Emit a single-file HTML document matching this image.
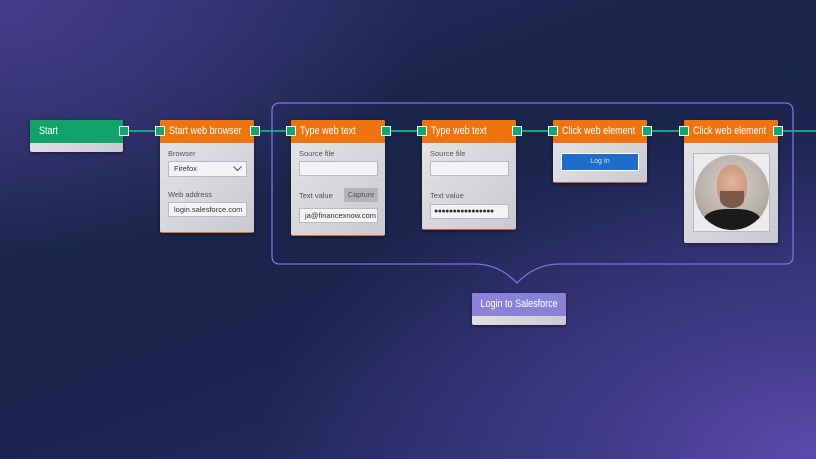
<!DOCTYPE html>
<html><head><style>
*{margin:0;padding:0;box-sizing:border-box}
body{width:816px;height:459px;overflow:hidden;position:relative;font-family:"Liberation Sans",sans-serif;
background:radial-gradient(ellipse 420px 260px at 0% 0%,#463c88 0%,rgba(70,60,136,0) 100%),radial-gradient(ellipse 560px 330px at 100% 100%,#5d4aad 0%,#3f3a86 40%,rgba(40,40,100,0) 100%),linear-gradient(160deg,#28306a 0%,#19254a 35%,#1c2550 60%,#2a2d6a 100%);}
.n{position:absolute;background:linear-gradient(135deg,#e6e6ea,#c9c9cf);border-radius:2px;box-shadow:0 1px 3px rgba(0,0,0,.5)}
.hh{height:23px;color:#fff;font-size:11px;line-height:23px;padding-left:9px;border-radius:2px 2px 0 0;white-space:nowrap;overflow:hidden}
.hh span{display:inline-block;transform:scaleX(.82);transform-origin:left}
.l{position:absolute;font-size:7.5px;color:#555;left:8px;white-space:nowrap}
.f{position:absolute;left:8px;width:79px;height:15px;background:#f3f3f5;border:1px solid #b9b9bf;font-size:7.5px;line-height:13px;padding-left:5px;color:#333;white-space:nowrap;overflow:hidden}
.sep{position:absolute;left:0;right:0;height:1px;background:#d8d8dc}
.c{position:absolute;width:10px;height:10px;background:#14a472;border:1.5px solid #e8fff4;top:126px}
.ln{position:absolute;height:2px;background:#16a57a;top:130px}
</style></head><body>
<div class="ln" style="left:128px;width:32px"></div>
<div class="ln" style="left:258px;width:33px"></div>
<div class="ln" style="left:389px;width:33px"></div>
<div class="ln" style="left:520px;width:33px"></div>
<div class="ln" style="left:651px;width:33px"></div>
<div class="ln" style="left:782px;width:34px"></div>

<svg style="position:absolute;left:0;top:0" width="816" height="459"><path d="M280 103 H785 Q793 103 793 111 V256 Q793 264 785 264 H560 Q535 264 517 283 Q499 264 474 264 H280 Q272 264 272 256 V111 Q272 103 280 103 Z" fill="none" stroke="#7d72e0" stroke-width="1.3"/></svg>

<div class="n" style="left:30px;top:120px;width:93px;height:32px"><div class="hh" style="background:#12a26c"><span>Start</span></div></div>

<div class="n" style="left:160px;top:120px;width:94px;height:113px;border-bottom:1px solid #e07020">
<div class="hh" style="background:#ee7410"><span>Start web browser</span></div>
<div class="l" style="top:29px">Browser</div>
<div class="f" style="top:41px;height:16px;line-height:14px">Firefox<svg style="position:absolute;right:4px;top:4px" width="9" height="6"><path d="M0.5 0.5 L4.5 4.5 L8.5 0.5" fill="none" stroke="#555" stroke-width="1"/></svg></div>
<div class="sep" style="top:63px"></div>
<div class="l" style="top:70px">Web address</div>
<div class="f" style="top:82px">login.salesforce.com</div>
</div>

<div class="n" style="left:291px;top:120px;width:94px;height:116px;border-bottom:1px solid #e07020">
<div class="hh" style="background:#ee7410"><span>Type web text</span></div>
<div class="l" style="top:29px">Source file</div>
<div class="f" style="top:41px"></div>
<div class="sep" style="top:63px"></div>
<div class="l" style="top:71px">Text value</div>
<div style="position:absolute;left:53px;top:68px;width:34px;height:14px;background:#b3b3b8;font-size:7.5px;color:#555;text-align:center;line-height:14px">Capture</div>
<div class="f" style="top:88px">ja@financexnow.com</div>
</div>

<div class="n" style="left:422px;top:120px;width:94px;height:110px;border-bottom:1.5px solid #e0503a">
<div class="hh" style="background:#ee7410"><span>Type web text</span></div>
<div class="l" style="top:29px">Source file</div>
<div class="f" style="top:41px"></div>
<div class="sep" style="top:63px"></div>
<div class="l" style="top:71px">Text value</div>
<div class="f" style="top:84px;font-size:7px;letter-spacing:-.5px;padding-left:3px">●●●●●●●●●●●●●●●●</div>
</div>

<div class="n" style="left:553px;top:120px;width:94px;height:63px;border-bottom:1.5px solid #e0503a">
<div class="hh" style="background:#ee7410"><span>Click web element</span></div>
<div style="position:absolute;left:8px;top:33px;width:78px;height:18px;border:1px solid #fff;background:#1f6dc8;color:#cfe0f5;font-size:7px;text-align:center;line-height:16px">Log In</div>
</div>

<div class="n" style="left:684px;top:120px;width:94px;height:123px">
<div class="hh" style="background:#ee7410"><span>Click web element</span></div>
<div style="position:absolute;left:9px;top:33px;width:77px;height:79px;background:#ececee;border:1px solid #bbb"></div>
<div style="position:absolute;left:11px;top:35px;width:74px;height:75px;border-radius:50%;background:radial-gradient(circle at 50% 40%,#d8d2ca 0,#b7b0a8 60%,#8c8680 100%);overflow:hidden">
<div style="position:absolute;left:8px;top:54px;width:58px;height:30px;background:#1a1a1c;border-radius:40% 40% 0 0"></div>
<div style="position:absolute;left:22px;top:10px;width:30px;height:42px;border-radius:45%;background:radial-gradient(circle at 50% 40%,#e6b49a,#b9836a)"></div>
<div style="position:absolute;left:25px;top:36px;width:24px;height:17px;border-radius:0 0 50% 50%;background:#7a5a48"></div>
</div>
</div>

<div class="n" style="left:472px;top:293px;width:94px;height:32px"><div class="hh" style="background:#8b81d9;text-align:center;padding-left:0"><span style="transform-origin:center">Login to Salesforce</span></div></div>

<div class="c" style="left:119px"></div>
<div class="c" style="left:155px"></div>
<div class="c" style="left:250px"></div>
<div class="c" style="left:286px"></div>
<div class="c" style="left:381px"></div>
<div class="c" style="left:417px"></div>
<div class="c" style="left:512px"></div>
<div class="c" style="left:548px"></div>
<div class="c" style="left:642px"></div>
<div class="c" style="left:679px"></div>
<div class="c" style="left:773px"></div>
</body></html>
